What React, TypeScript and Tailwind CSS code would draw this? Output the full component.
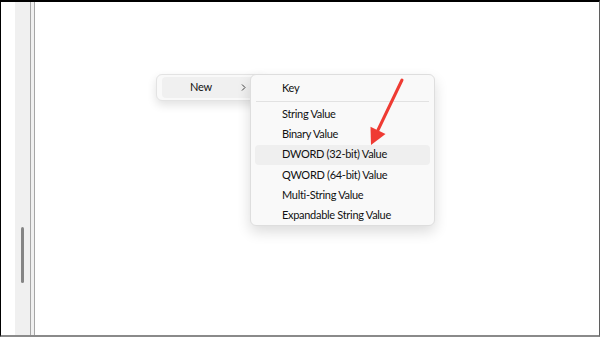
import React from 'react';

const items = [
  'String Value',
  'Binary Value',
  'DWORD (32-bit) Value',
  'QWORD (64-bit) Value',
  'Multi-String Value',
  'Expandable String Value',
];

const Arrow: React.FC = () => (
  <svg className="absolute left-0 top-0 pointer-events-none" width="600" height="337" viewBox="0 0 600 337">
    <line x1="401" y1="78" x2="377" y2="128" stroke="#ef3b33" strokeWidth="3" strokeLinecap="round" />
    <polygon points="370,143 369.5,124.8 384.5,132" fill="#ef3b33" />
  </svg>
);

const App: React.FC = () => {
  return (
    <div
      className="relative w-[600px] h-[337px] bg-white flex border-l border-t-2 border-l-black border-t-black border-r border-r-[#5f5f5f] border-b-2 border-b-[#8a8a8a] overflow-hidden"
      style={{ fontFamily: 'Lato, "Noto Sans", sans-serif' }}
    >
      <div className="w-[14px] h-full bg-white" />
      <div className="w-[15px] h-full bg-[#f0f0f0] flex flex-col items-center pt-[225px]">
        <div className="w-[3px] h-[56px] rounded-full bg-[#858585]" />
      </div>
      <div className="w-px h-full bg-[#a6a6a6]" />
      <div className="w-[3px] h-full bg-[#f0f0f0]" />
      <div className="w-px h-full bg-[#a6a6a6]" />
      <div className="flex-1 h-full relative bg-white">
        {/* parent menu */}
        <div className="absolute left-[121px] top-[72px] w-[110px] h-[27px] rounded-[6px] bg-[#f9f9f9] border border-[#e3e3e3] shadow-[0_4px_10px_rgba(0,0,0,0.12)] p-[2px] pl-[5px]">
          <div className="h-[21px] rounded-[4px] bg-[#f0f0f0] flex items-center text-[11px] text-[#111] tracking-[-0.2px]">
            <span className="ml-[28px] -mt-[1px]">New</span>
            <span className="ml-[28px] flex items-center">
              <svg width="7" height="9" viewBox="0 0 7 9"><path d="M2 1.5 L5 4.5 L2 7.5" stroke="#444" strokeWidth="1" fill="none" /></svg>
            </span>
          </div>
        </div>
        {/* submenu */}
        <div className="absolute left-[215px] top-[72px] w-[185px] h-[152px] rounded-[6px] bg-[#f9f9f9] border border-[#dedede] shadow-[0_6px_14px_rgba(0,0,0,0.14)] px-[4px] pt-[3px] text-[11px] text-[#111] tracking-[-0.3px]">
          <div className="h-[20px] flex items-center pl-[27px]">Key</div>
          <div className="h-px bg-[#e2e2e2] mx-[1px] mt-[3px] mb-[2px]" />
          <div>
            {items.map((it) => (
              <div
                key={it}
                className={`h-[20.3px] flex items-center pl-[27px] rounded-[4px] ${it.startsWith('DWORD') ? 'bg-[#efefef]' : ''}`}
              >
                {it}
              </div>
            ))}
          </div>
        </div>
      </div>
      <Arrow />
    </div>
  );
};

export default App;
